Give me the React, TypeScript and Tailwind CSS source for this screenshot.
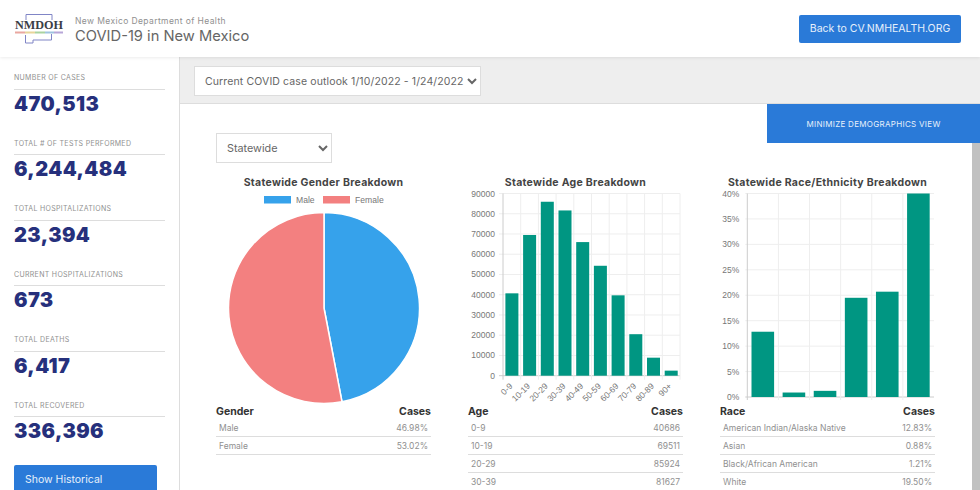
const stats = [
  { label: "NUMBER OF CASES", value: "470,513" },
  { label: "TOTAL # OF TESTS PERFORMED", value: "6,244,484" },
  { label: "TOTAL HOSPITALIZATIONS", value: "23,394" },
  { label: "CURRENT HOSPITALIZATIONS", value: "673" },
  { label: "TOTAL DEATHS", value: "6,417" },
  { label: "TOTAL RECOVERED", value: "336,396" },
]

const ageData = [
  { label: "0-9", value: 40686 },
  { label: "10-19", value: 69511 },
  { label: "20-29", value: 85924 },
  { label: "30-39", value: 81627 },
  { label: "40-49", value: 66000 },
  { label: "50-59", value: 54300 },
  { label: "60-69", value: 39700 },
  { label: "70-79", value: 20500 },
  { label: "80-89", value: 8900 },
  { label: "90+", value: 2500 },
]

const raceData = [12.83, 0.88, 1.21, 19.5, 20.7, 40]

const genderRows = [
  ["Male", "46.98%"],
  ["Female", "53.02%"],
]

const ageRows = [
  ["0-9", "40686"],
  ["10-19", "69511"],
  ["20-29", "85924"],
  ["30-39", "81627"],
]

const raceRows = [
  ["American Indian/Alaska Native", "12.83%"],
  ["Asian", "0.88%"],
  ["Black/African American", "1.21%"],
  ["White", "19.50%"],
]

const chartFont = "'Liberation Sans', Arial, sans-serif"

const Logo = () => (
  <svg width="50" height="31" viewBox="0 0 50 31" className="shrink-0">
    <path d="M12 7 V1.5 H38 V7 M37.5 21 V27 H19 V30 H11.5 V22" fill="none" stroke="#8085c6" strokeWidth="1" />
    <text x="25" y="16" textAnchor="middle" fontSize="11.5" fontWeight="700" fill="#3a3e46" fontFamily="'Liberation Serif', serif" textLength="48" lengthAdjust="spacingAndGlyphs">NMDOH</text>
    <rect x="1" y="18.5" width="10" height="2" fill="#e9a7a0" />
    <rect x="11" y="18.5" width="10" height="2" fill="#e8d59a" />
    <rect x="21" y="18.5" width="10" height="2" fill="#a9d3a0" />
    <rect x="31" y="18.5" width="9" height="2" fill="#9fc4df" />
    <rect x="40" y="18.5" width="9" height="2" fill="#b7a6d8" />
  </svg>
)

const GenderChart = () => {
  const cx = 108
  const cy = 118
  const r = 95.5
  const angle = 0.4698 * 2 * Math.PI
  const ex = cx + r * Math.sin(angle)
  const ey = cy - r * Math.cos(angle)
  return (
    <svg width="215" height="214" viewBox="0 0 215 214" className="block overflow-visible">
      <rect x="48" y="6" width="27" height="7.5" fill="#36a2eb" />
      <text x="80" y="12.5" fontSize="8.6" fill="#777" fontFamily={chartFont}>Male</text>
      <rect x="107" y="6" width="27" height="7.5" fill="#f38080" />
      <text x="139" y="12.5" fontSize="8.6" fill="#777" fontFamily={chartFont}>Female</text>
      <path d={`M${cx} ${cy} L${cx} ${cy - r} A${r} ${r} 0 0 1 ${ex} ${ey} Z`} fill="#36a2eb" stroke="#fff" strokeWidth="1.5" />
      <path d={`M${cx} ${cy} L${ex} ${ey} A${r} ${r} 0 1 1 ${cx} ${cy - r} Z`} fill="#f38080" stroke="#fff" strokeWidth="1.5" />
    </svg>
  )
}

const AgeChart = () => {
  const left = 35
  const right = 212
  const top = 3.5
  const bottom = 185.7
  const step = (right - left) / 10
  const ticks = [0, 10000, 20000, 30000, 40000, 50000, 60000, 70000, 80000, 90000]
  return (
    <svg width="215" height="214" viewBox="0 0 215 214" className="block overflow-visible">
      {ticks.map((t) => {
        const y = bottom - (t / 90000) * (bottom - top)
        return (
          <g key={t}>
            <line x1={left - 4} x2={right} y1={y} y2={y} stroke={t === 0 ? "#ccc" : "#eee"} />
            <text x={left - 8} y={y + 3} textAnchor="end" fontSize="8.5" fill="#777" fontFamily={chartFont}>{t}</text>
          </g>
        )
      })}
      {ageData.map((d, i) => {
        const x = left + step * i
        const h = (d.value / 90000) * (bottom - top)
        return (
          <g key={d.label}>
            <line x1={x} x2={x} y1={top} y2={bottom + 4} stroke={i === 0 ? "#ccc" : "#eee"} />
            <rect x={x + 2.4} y={bottom - h} width="13" height={h} fill="#009682" />
            <text
              x={x + 10}
              y={bottom + 11}
              textAnchor="end"
              fontSize="8.5"
              fill="#777"
              fontFamily={chartFont}
              transform={`rotate(-45 ${x + 10} ${bottom + 11})`}
            >
              {d.label}
            </text>
          </g>
        )
      })}
      <line x1={right} x2={right} y1={top} y2={bottom + 4} stroke="#eee" />
    </svg>
  )
}

const RaceChart = () => {
  const left = 27.3
  const right = 214
  const top = 3.5
  const bottom = 207
  const step = (right - left) / 6
  const ticks = [0, 5, 10, 15, 20, 25, 30, 35, 40]
  return (
    <svg width="215" height="214" viewBox="0 0 215 214" className="block overflow-visible">
      {ticks.map((t) => {
        const y = bottom - (t / 40) * (bottom - top)
        return (
          <g key={t}>
            <line x1={left - 2} x2={right} y1={y} y2={y} stroke={t === 0 ? "#ccc" : "#eee"} />
            <text x={left - 8} y={y + 3} textAnchor="end" fontSize="8.5" fill="#777" fontFamily={chartFont}>{t}%</text>
          </g>
        )
      })}
      {raceData.map((v, i) => {
        const x = left + step * i
        const h = (v / 40) * (bottom - top)
        return (
          <g key={i}>
            <line x1={x} x2={x} y1={top} y2={bottom + 3} stroke={i === 0 ? "#ccc" : "#eee"} />
            <rect x={x + 4.2} y={bottom - h} width="22.6" height={h} fill="#009682" />
          </g>
        )
      })}
    </svg>
  )
}

const BreakdownTable = ({ name, rows }: { name: string; rows: string[][] }) => (
  <div>
    <div className="flex h-[15px] items-center justify-between text-[10.5px] font-bold text-[#333]">
      <span>{name}</span>
      <span>Cases</span>
    </div>
    {rows.map(([label, value]) => (
      <div
        key={label}
        className="flex h-[18px] items-center justify-between border-b border-[#ddd] px-[3px] pt-[2px] text-[8.5px] text-[#909090]"
      >
        <span>{label}</span>
        <span>{value}</span>
      </div>
    ))}
  </div>
)

const ChartColumn = ({ title, children, name, rows }: { title: string; children: React.ReactNode; name: string; rows: string[][] }) => (
  <div className="w-[215px] shrink-0">
    <h3 className="h-[14px] text-center text-[10.5px] leading-[14px] font-bold tracking-[0.3px] whitespace-nowrap text-[#444]">{title}</h3>
    {children}
    <BreakdownTable name={name} rows={rows} />
  </div>
)

export default function App() {
  return (
    <div className="flex h-[490px] w-[980px] flex-col overflow-hidden bg-white font-['Inter',sans-serif]">
      <header className="relative z-10 flex h-[57px] shrink-0 items-center justify-between bg-white pr-[19px] pl-[14px] shadow-[0_1px_3px_rgba(0,0,0,0.08)]">
        <div className="flex items-center gap-[11px]">
          <Logo />
          <div className="pt-[4px]">
            <div className="text-[8.5px] leading-[12px] tracking-[0.4px] text-[#909090]">New Mexico Department of Health</div>
            <div className="text-[14.7px] leading-[19px] text-[#666]">COVID-19 in New Mexico</div>
          </div>
        </div>
        <button className="h-[28px] w-[162px] rounded-[2px] bg-[#2a7ad8] text-[10.5px] text-[#e6f0fb]">Back to CV.NMHEALTH.ORG</button>
      </header>

      <div className="flex min-h-0 flex-1">
        <aside className="w-[180px] shrink-0 border-r border-[#ddd] px-[14px] pt-[14px]">
          {stats.map((s) => (
            <div key={s.label} className="h-[65.5px]">
              <div className="h-[18.5px] border-b border-[#ddd] pt-[1px] text-[7px] leading-[11px] tracking-[0.32px] whitespace-nowrap text-[#909090]">{s.label}</div>
              <div className="text-[20px] leading-[29px] font-black tracking-[0.4px] text-[#26307c]">{s.value}</div>
            </div>
          ))}
          <button className="mt-[1px] h-[60px] w-[143px] rounded-[2px] bg-[#2a7ad8] px-[11px] pt-[7px] text-left align-top text-[10.5px] leading-[15px] text-[#e6f0fb]">
            <span className="block h-full">Show Historical Statewide Data</span>
          </button>
        </aside>

        <main className="flex min-w-0 flex-1 flex-col">
          <div className="flex h-[47px] shrink-0 items-start border-b border-[#ddd] bg-[#eeeeee] pt-[9px] pl-[14px]">
            <select className="h-[30px] w-[287px] border border-[#ddd] bg-white pr-0 pl-[6px] text-[10.5px] tracking-[0.12px] text-[#666]">
              <option>Current COVID case outlook 1/10/2022 - 1/24/2022</option>
            </select>
          </div>

          <div className="relative min-h-0 flex-1 overflow-hidden pt-[29px] pl-[36px]">
            <select className="h-[30px] w-[116px] border border-[#ddd] bg-white px-[6px] text-[10.8px] text-[#666]">
              <option>Statewide</option>
            </select>

            <div className="mt-[13px] flex gap-[37px]">
              <ChartColumn title="Statewide Gender Breakdown" name="Gender" rows={genderRows}>
                <GenderChart />
              </ChartColumn>
              <ChartColumn title="Statewide Age Breakdown" name="Age" rows={ageRows}>
                <AgeChart />
              </ChartColumn>
              <ChartColumn title="Statewide Race/Ethnicity Breakdown" name="Race" rows={raceRows}>
                <RaceChart />
              </ChartColumn>
            </div>

            <button className="absolute top-0 right-0 h-[39px] w-[213px] bg-[#2a7ad8] text-[8px] tracking-[0.3px] text-[#e6f0fb]">MINIMIZE DEMOGRAPHICS VIEW</button>
            <div className="absolute top-[39px] right-0 bottom-0 w-[8px] bg-[#c1c1c1]" />
          </div>
        </main>
      </div>
    </div>
  )
}
